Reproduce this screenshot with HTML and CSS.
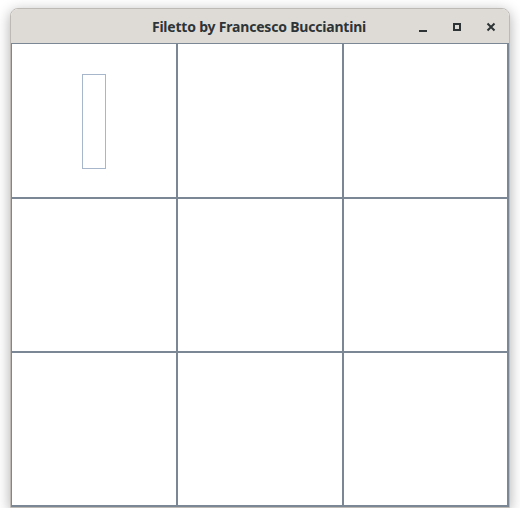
FILE: index.html
```html
<!DOCTYPE html>
<html lang="en">
<head>
    <meta charset="UTF-8">
    <meta name="viewport" content="width=device-width, initial-scale=1.0">
    <title>Filetto by Francesco Bucciantini</title>
    <link rel="stylesheet" href="styles.css">
</head>
<body>
    <div class="window">
        <div class="titlebar">
            <div class="title">Filetto by Francesco Bucciantini</div>
            <div class="controls">
                <span class="ctrl minimize"></span>
                <span class="ctrl maximize"></span>
                <span class="ctrl close">
                    <svg width="10" height="10" viewBox="0 0 10 10">
                        <path d="M1.5 1.5 L8.5 8.5 M8.5 1.5 L1.5 8.5" stroke="#2e3436" stroke-width="2"/>
                    </svg>
                </span>
            </div>
        </div>
        <div class="board">
            <div class="cell"><div class="marker"></div></div>
            <div class="cell"></div>
            <div class="cell"></div>
            <div class="cell"></div>
            <div class="cell"></div>
            <div class="cell"></div>
            <div class="cell"></div>
            <div class="cell"></div>
            <div class="cell"></div>
        </div>
    </div>
</body>
</html>
```

FILE: styles.css
```css
* {
    margin: 0;
    padding: 0;
    box-sizing: border-box;
}

body {
    background: #ffffff;
    font-family: 'Noto Sans', 'DejaVu Sans', sans-serif;
    padding: 8px 0 0 10px;
}

.window {
    width: 500px;
    height: 500px;
    border: 1px solid #bdb9b4;
    border-radius: 8px 8px 0 0;
    background: #ffffff;
    box-shadow: 0 3px 14px rgba(0, 0, 0, 0.32);
    display: flex;
    flex-direction: column;
    overflow: hidden;
}

.titlebar {
    height: 35px;
    background: #dedbd7;
    display: flex;
    align-items: center;
    justify-content: center;
    position: relative;
}

.title {
    font-size: 14px;
    font-weight: 700;
    color: #2e3436;
    margin-left: -2px;
    letter-spacing: -0.2px;
}

.controls {
    position: absolute;
    right: 0;
    top: 0;
    height: 35px;
    display: flex;
    align-items: center;
}

.ctrl {
    width: 34px;
    height: 35px;
    display: flex;
    align-items: center;
    justify-content: center;
}

.minimize::before {
    content: '';
    width: 8px;
    height: 2px;
    background: #2e3436;
    margin-top: 9px;
}

.maximize::before {
    content: '';
    box-sizing: border-box;
    width: 8px;
    height: 8px;
    border: 2px solid #2e3436;
    margin-top: 1px;
}

.close {
    margin-right: 1px;
}

.board {
    flex: 1;
    display: grid;
    grid-template-columns: 164px 164px 163px;
    grid-template-rows: 153px 152px 152px;
    gap: 2px;
    padding: 1px 2px 2px 1px;
    background: #7b8794;
}

.cell {
    background: #ffffff;
}

.marker {
    width: 24px;
    height: 95px;
    margin: 30px 0 0 70px;
    border: 1px solid #a8b6cb;
}
```
